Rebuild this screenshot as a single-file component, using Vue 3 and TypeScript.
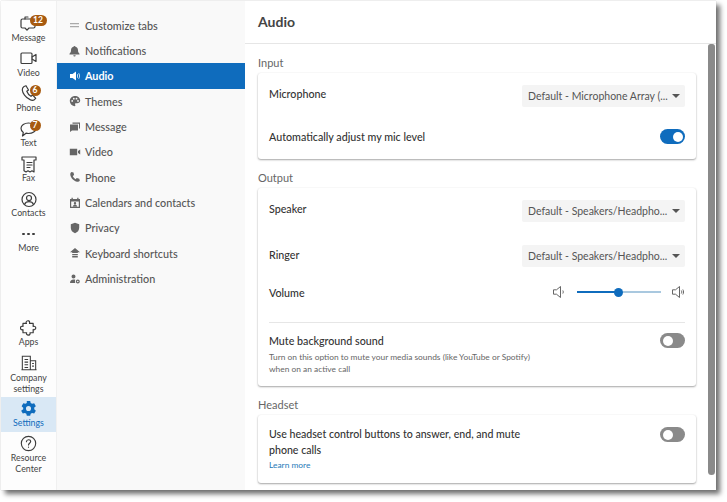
<template>
  <div class="page">
    <div class="window">
      <aside class="rail">
        <div class="rail-group">
          <div v-for="item in topRail" :key="item.label" class="rail-item">
            <span class="rail-icon">
              <svg width="22" height="22" viewBox="0 0 22 22" fill="none" stroke="#3c3c3c" stroke-width="1.2" stroke-linecap="round" stroke-linejoin="round">
                <path v-for="(d, i) in item.paths" :key="i" :d="d" />
              </svg>
              <span v-if="item.badge" class="badge" :class="{ wide: item.badge > 9 }">{{ item.badge }}</span>
            </span>
            <span class="rail-label">{{ item.label }}</span>
          </div>
          <div class="rail-item">
            <span class="rail-icon more"><i></i><i></i><i></i></span>
            <span class="rail-label">More</span>
          </div>
        </div>
        <div class="rail-group">
          <div class="rail-item apps">
            <span class="rail-icon">
              <svg width="17" height="17" viewBox="0 0 20 20" fill="none" stroke="#3c3c3c" stroke-width="1.4" stroke-linejoin="round">
                <path d="M8 2.500c1.500-1 3.400-.2 3.300 1.600l-.1 1.100h4.300v3.600c1.800-.8 3.200.6 3 2-.2 1.600-1.700 2.300-3 1.500v3.900h-3.800c.7 1.700-.6 2.800-2 2.800s-2.600-1.300-1.900-2.800H3.500v-3.700c-1.700.8-3-.3-3-1.800s1.400-2.700 3-1.900V5.200h4.100C6.900 4.400 7 3.200 8 2.500z" />
              </svg>
            </span>
            <span class="rail-label">Apps</span>
          </div>
          <div class="rail-item tall">
            <span class="rail-icon">
              <svg width="16" height="16" viewBox="0 0 18 18" fill="none" stroke="#3c3c3c" stroke-width="1.2">
                <path d="M1.500 16.500V1.500h9v15M10.500 6.500h6v10M.5 16.500h17M4 5h4M4 8h4M4 11h4M4 14h4M12.500 9.500h2M12.500 12.500h2" />
              </svg>
            </span>
            <span class="rail-label">Company<br />settings</span>
          </div>
          <div class="rail-item active">
            <span class="rail-icon">
              <svg width="17" height="17" viewBox="0 0 18 18" fill="#0f6cbd">
                <path fill-rule="evenodd" d="M7.200 1h3.600l.5 2.200 1.500.9 2.200-.7 1.800 3.100-1.700 1.500v1.800l1.700 1.500-1.800 3.100-2.200-.7-1.500.9-.5 2.200H7.200l-.5-2.200-1.500-.9-2.200.7-1.800-3.100L3.400 9.900V8.100L1.700 6.500l1.800-3.100 2.200.7 1.500-.9zM9 6.300a2.700 2.700 0 100 5.400 2.700 2.700 0 000-5.400z" />
              </svg>
            </span>
            <span class="rail-label">Settings</span>
          </div>
          <div class="rail-item tall">
            <span class="rail-icon">
              <svg width="17" height="17" viewBox="0 0 18 18" fill="none" stroke="#3c3c3c" stroke-width="1.2" stroke-linecap="round">
                <circle cx="9" cy="9" r="7.600" />
                <path d="M6.800 7.100C6.900 5.800 7.900 5 9.100 5c1.300 0 2.200.9 2.200 2 0 1.800-2.300 1.800-2.300 3.600" />
                <path d="M9 12.900v.1" />
              </svg>
            </span>
            <span class="rail-label">Resource<br />Center</span>
          </div>
        </div>
      </aside>

      <nav class="side">
        <div v-for="item in navItems" :key="item.label" class="side-item" :class="{ current: item.label === 'Audio' }">
          <svg class="side-icon" width="12" height="12" viewBox="0 0 12 12" fill="currentColor">
            <path :d="item.icon" />
          </svg>
          <span>{{ item.label }}</span>
        </div>
      </nav>

      <main class="main">
        <header class="head">Audio</header>
        <div class="scroll">
          <div class="content">
            <h3 class="section">Input</h3>
            <section class="card">
              <div class="row mic">
                <span class="name">Microphone</span>
                <div class="select"><span>Default - Microphone Array (...</span><i class="caret"></i></div>
              </div>
              <div class="row auto">
                <span class="name">Automatically adjust my mic level</span>
                <span class="toggle on"><i></i></span>
              </div>
            </section>

            <h3 class="section">Output</h3>
            <section class="card">
              <div class="row speaker">
                <span class="name">Speaker</span>
                <div class="select"><span>Default - Speakers/Headpho...</span><i class="caret"></i></div>
              </div>
              <div class="row ringer">
                <span class="name">Ringer</span>
                <div class="select"><span>Default - Speakers/Headpho...</span><i class="caret"></i></div>
              </div>
              <div class="row volume">
                <span class="name">Volume</span>
                <div class="slider-wrap">
                  <svg width="13" height="14" viewBox="0 0 13 14" fill="none" stroke="#555" stroke-width="0.9" stroke-linejoin="round">
                    <path d="M.5 4.800h3l4-3.300v11l-4-3.300h-3zM9.800 5.500c.6.900.6 2.100 0 3" />
                  </svg>
                  <div class="slider"><div class="fill" :style="{ width: volume + '%' }"></div><i class="knob" :style="{ left: volume + '%' }"></i></div>
                  <svg width="13" height="14" viewBox="0 0 13 14" fill="none" stroke="#555" stroke-width="0.9" stroke-linejoin="round">
                    <path d="M.5 4.800h3l4-3.300v11l-4-3.300h-3zM9.300 5.500c.6.900.6 2.100 0 3M10.800 4.500c1 1.500 1 3.500 0 5" />
                  </svg>
                </div>
              </div>
              <div class="divider"></div>
              <div class="row mute">
                <div>
                  <div class="name">Mute background sound</div>
                  <p class="desc">Turn on this option to mute your media sounds (like YouTube or Spotify)<br />when on an active call</p>
                </div>
                <span class="toggle"><i></i></span>
              </div>
            </section>

            <h3 class="section">Headset</h3>
            <section class="card">
              <div class="row headset">
                <div>
                  <div class="name long">Use headset control buttons to answer, end, and mute phone calls</div>
                  <a class="learn">Learn more</a>
                </div>
                <span class="toggle"><i></i></span>
              </div>
            </section>
          </div>
          <div class="scrollbar"></div>
        </div>
      </main>
    </div>
  </div>
</template>

<script setup lang="ts">
const volume = 49

const topRail: { label: string; badge?: number; paths: string[] }[] = [
  { label: 'Message', badge: 12, paths: ['M4.500 7h11a1.500 1.500 0 011.500 1.500v6a1.500 1.500 0 01-1.500 1.500H11l-2 2.200L7 16H4.500A1.500 1.500 0 013 14.500v-6A1.500 1.500 0 014.500 7z', 'M7 7V5h3'] },
  { label: 'Video', paths: ['M4 6h9a1 1 0 011 1v8.500a1 1 0 01-1 1H4a1 1 0 01-1-1V7a1 1 0 011-1z', 'M14 10l4-2.500v7L14 12'] },
  { label: 'Phone', badge: 6, paths: ['M6 4.500l2-.8 2.500 4.300-1.700 1.300c.7 2 2 3.700 4.200 5l1.700-1.300 3 3.400-1.300 1.300c-1.300.9-3 .7-4.700-.3C7.500 15.500 4.500 11 4.300 8 4.200 6.500 4.900 5.200 6 4.500z'] },
  { label: 'Text', badge: 7, paths: ['M10.500 6c4 0 7.500 2.300 7.500 5.300s-3.500 5.200-7.500 5.200c-.9 0-1.800-.1-2.500-.3L4.500 19l.8-3.400C3.900 14.600 3 13 3 11.300 3 8.300 6.500 6 10.500 6z'] },
  { label: 'Fax', paths: ['M4 5h14v3h-2v12l-2-1.200-2 1.200-2-1.200-2 1.200-2-1.200V8H4z', 'M9 10.500h5M9 13h5M9 15.500h3'] },
  { label: 'Contacts', paths: ['M11 5.500a7 7 0 110 14 7 7 0 010-14z', 'M11 8.500a2.500 2.500 0 110 5 2.500 2.500 0 010-5z', 'M6.500 17.500c.8-2 2.500-2.800 4.500-2.800s3.700.8 4.500 2.800'] },
]

const navItems: { label: string; icon: string }[] = [
  { label: 'Customize tabs', icon: 'M1 4h9v1.200H1zM1 7h9v1.200H1z' },
  { label: 'Notifications', icon: 'M5.500 1c.5 0 .9.300 1 .8 1.700.4 2.500 1.700 2.500 3.400 0 1.800.6 2.600 1.500 3.600v.7H.5v-.7c.9-1 1.500-1.800 1.500-3.600 0-1.700.8-3 2.500-3.400.1-.5.500-.8 1-.8zM4.300 10.300h2.400a1.200 1.200 0 01-2.400 0z' },
  { label: 'Audio', icon: 'M1 4h2.500L7 1.500v9L3.500 8H1zM8.500 4c.7 1.200.7 2.800 0 4l-.6-.4c.5-1 .5-2.200 0-3.200zM10 3c1.100 1.900 1.100 4.100 0 6l-.6-.4c.9-1.600.9-3.600 0-5.200z' },
  { label: 'Themes', icon: 'M6 1c3 0 5.200 2 5.200 4.500 0 1.800-1.400 2.800-3 2.800H7c-.7 0-1 .4-1 .8 0 .6.400.8.400 1.300 0 .5-.4.800-1 .8C2.800 10.800.8 8.500.8 6 .8 3.200 3 1 6 1zM3.200 5a.9.900 0 100 1.800.9.900 0 000-1.800zM4.800 2.800a.9.900 0 100 1.800.9.900 0 000-1.800zM7.500 2.800a.9.900 0 100 1.800.9.900 0 000-1.800zM9 5a.9.900 0 100 1.800A.9.900 0 009 5z' },
  { label: 'Message', icon: 'M3.500 1.500H11v6h-1V2.700H3.500zM1 3.500h8v6H3L1 11z' },
  { label: 'Video', icon: 'M.8 2.800h7.400v6.400H.8zM9 5l2.200-1.500v5L9 7z' },
  { label: 'Phone', icon: 'M2.500 1l2 .5.6 2.600-1.300.9c.5 1.400 1.500 2.500 2.800 3.200l1.100-1.200 2.600.8.500 2c-.5.900-1.500 1.200-2.600 1C4.700 10.200 1.700 7 1.300 3.800 1.200 2.500 1.600 1.500 2.500 1z' },
  { label: 'Calendars and contacts', icon: 'M2.500.8h1.300v1.200h4.400V.8h1.300V2H11v9H1V2h1.500zM2.200 4.500v5.300h7.600V4.500zM6 5a1.200 1.200 0 110 2.400A1.200 1.200 0 016 5zM3.800 9.500c.2-1.200 1-1.700 2.200-1.700s2 .5 2.200 1.700z' },
  { label: 'Privacy', icon: 'M6 .8l4.200 1.500v3.500c0 2.700-1.700 4.500-4.200 5.500-2.500-1-4.200-2.800-4.200-5.500V2.300z' },
  { label: 'Keyboard shortcuts', icon: 'M6 1l5 4.200H8.800v.8H3.200v-.8H1zM3.200 7h5.600v1.200H3.200zM3.200 9h5.600v1.500H3.200z' },
  { label: 'Administration', icon: 'M4.500 1.500a2 2 0 110 4 2 2 0 010-4zM1 10c0-2.200 1.400-3.600 3.500-3.600.7 0 1.300.2 1.800.4-.4.800-.5 2 0 3.200zM8.800 6.500a2 2 0 110 4 2 2 0 010-4zm0 1.200a.8.8 0 100 1.600.8.8 0 000-1.600z' },
]
</script>

<style>
html, body { margin: 0; background: #fff; }
</style>

<style scoped>
.page {
  width: 727px;
  height: 502px;
  overflow: hidden;
  padding: 1px 0 0 1px;
  box-sizing: border-box;
  font-family: Lato, "Liberation Sans", sans-serif;
  color: #3c3c3c;
}
.window {
  display: flex;
  width: 715px;
  height: 489px;
  background: #fff;
  box-shadow: 4px 4px 5px #6f6f6f, 0 0 1px #bbb;
}

.rail {
  width: 56px;
  flex: none;
  display: flex;
  flex-direction: column;
  justify-content: space-between;
  padding: 11px 0 13px;
  box-sizing: border-box;
  background: #fdfdfd;
  border-right: 1px solid #f0f0f0;
}
.rail-item {
  display: flex;
  flex-direction: column;
  align-items: center;
  height: 35px;
  padding-top: 2px;
  box-sizing: border-box;
  font-size: 8.8px;
  line-height: 11px;
  text-align: center;
}
.rail-item.apps { height: 36px; }
.rail-item.tall { height: 45px; }
.rail-icon {
  position: relative;
  display: flex;
  align-items: center;
  justify-content: center;
  width: 22px;
  height: 18px;
}
.rail-label { color: #444; }
.active { background: #d9e8f5; }
.active .rail-label { color: #0f6cbd; }
.badge {
  position: absolute;
  top: 1px;
  left: 12px;
  width: 11px;
  height: 11px;
  border-radius: 6px;
  background: #a85b10;
  color: #fff;
  font-size: 8.5px;
  font-weight: 700;
  line-height: 11px;
  text-align: center;
}
.badge.wide { width: 17px; }
.more { gap: 2.5px; padding-top: 2px; box-sizing: border-box; }
.more i { width: 2.5px; height: 2.5px; border-radius: 50%; background: #3c3c3c; }

.side {
  width: 188px;
  flex: none;
  padding-top: 11.5px;
  box-sizing: border-box;
  background: #f9f9f9;
}
.side-item {
  display: flex;
  align-items: center;
  gap: 4px;
  height: 25.35px;
  padding-left: 12px;
  font-size: 10.8px;
  font-weight: 500;
  color: #555;
}
.side-icon { flex: none; color: #666; }
.side-item:first-child .side-icon { color: #aaa; }
.side-item.current { background: #0f6cbd; color: #fff; font-weight: 700; }
.side-item.current .side-icon { color: #fff; }

.main {
  flex: 1;
  display: flex;
  flex-direction: column;
  min-width: 0;
}
.head {
  height: 42px;
  flex: none;
  padding-left: 13px;
  border-bottom: 1px solid #e6e6e6;
  font-size: 14px;
  font-weight: 700;
  line-height: 41px;
  color: #444;
}
.scroll {
  flex: 1;
  display: flex;
  min-height: 0;
}
.content {
  flex: 1;
  padding: 12px 12px 0 13px;
}
.scrollbar {
  width: 7px;
  height: 431px;
  margin-right: 1px;
  flex: none;
  background: #8a8a8a;
  border-radius: 3px 3px 4px 4px;
}
.section {
  margin: 0;
  height: 17px;
  font-size: 11px;
  font-weight: 400;
  line-height: 13px;
  color: #666;
}
.card {
  padding: 0 11px;
  margin-bottom: 12px;
  background: #fff;
  border-radius: 3px;
  box-shadow: 0 1px 2px rgba(0, 0, 0, 0.35), 0 0 2px rgba(0, 0, 0, 0.06);
}
.row {
  display: flex;
  justify-content: space-between;
}
.name {
  font-size: 10.7px;
  font-weight: 500;
  line-height: 16px;
  color: #333;
}
.mic { height: 56px; padding-top: 12px; box-sizing: border-box; }
.mic .name { margin-top: 1px; }
.auto { height: 30px; }
.select {
  display: flex;
  align-items: center;
  justify-content: space-between;
  width: 163px;
  height: 22px;
  padding: 0 5px 0 6px;
  box-sizing: border-box;
  border-radius: 2px;
  background: #f4f4f4;
  font-size: 10.5px;
  color: #555;
}
.caret {
  width: 0;
  height: 0;
  border: 4px solid transparent;
  border-top: 4px solid #555;
  border-bottom: 0;
}
.toggle {
  position: relative;
  flex: none;
  width: 25px;
  height: 15px;
  border-radius: 8px;
  background: #8a8a8a;
}
.toggle i {
  position: absolute;
  top: 2.5px;
  left: 2.5px;
  width: 10px;
  height: 10px;
  border-radius: 50%;
  background: #fff;
}
.toggle.on { background: #0f6cbd; }
.toggle.on i { left: 12.5px; }
.speaker { height: 57px; padding-top: 12px; box-sizing: border-box; }
.speaker .name { margin-top: 1px; }
.ringer { height: 37px; }
.ringer .name { margin-top: 2px; }
.volume { height: 40px; padding-top: 1px; box-sizing: border-box; align-items: flex-start; }
.volume .name { margin-top: 1.5px; }
.slider-wrap {
  display: flex;
  align-items: center;
  gap: 11px;
  height: 18px;
}
.slider {
  position: relative;
  width: 84px;
  height: 2px;
  background: #a9c8df;
}
.fill { height: 100%; background: #0f6cbd; }
.knob {
  position: absolute;
  top: -3.5px;
  margin-left: -4.5px;
  width: 9px;
  height: 9px;
  border-radius: 50%;
  background: #0f6cbd;
}
.divider { height: 1px; background: #e6e6e6; }
.mute { padding: 10px 0 11px; align-items: flex-start; }
.desc {
  margin: 2px 0 0;
  font-size: 8.4px;
  line-height: 12px;
  color: #666;
}
.headset { padding: 11px 0; align-items: flex-start; }
.headset .toggle { margin-top: 1px; }
.long { width: 270px; font-size: 10.6px; }
.learn {
  display: block;
  margin-top: 1px;
  font-size: 8.4px;
  line-height: 13px;
  color: #1f7ab8;
}
</style>
